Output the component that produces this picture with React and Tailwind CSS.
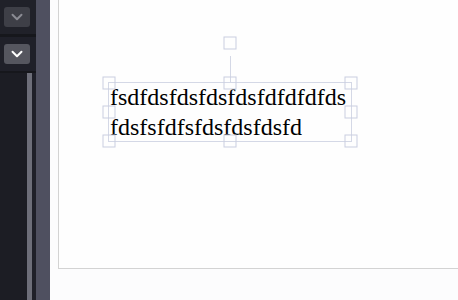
import React from 'react';

const Chevron = ({ className }) => (
  <svg viewBox="0 0 24 24" className={className} fill="none" stroke="currentColor" strokeWidth="2.6" strokeLinecap="round" strokeLinejoin="round">
    <path d="M6 9l6 6 6-6" />
  </svg>
);

const Handle = ({ className }) => (
  <div className={`absolute w-[13px] h-[13px] border border-[#c9cee0] ${className}`} />
);

const App = () => {
  return (
    <div className="flex h-[300px] w-[458px] overflow-hidden bg-[#fcfcfd]">
      {/* Sidebar */}
      <div className="flex w-[36px] shrink-0 flex-col bg-[#1c1d24]">
        <div className="flex h-[37px] items-center justify-center border-b-[3px] border-[#16171c] bg-[#202129] pr-[2px]">
          <button className="flex h-[20px] w-[26px] items-center justify-center rounded-[3px] bg-[#3e3f47] text-[#8b8c94]">
            <Chevron className="h-[18px] w-[18px]" />
          </button>
        </div>
        <div className="flex h-[36px] items-center justify-center border-b-[2px] border-[#16171c] bg-[#1f2029] pr-[2px]">
          <button className="flex h-[20px] w-[26px] items-center justify-center rounded-[3px] bg-[#55565f] text-white">
            <Chevron className="h-[18px] w-[18px]" />
          </button>
        </div>
        <div className="flex flex-1 justify-end">
          <div className="w-[5px] bg-[#6d6e79]" />
          <div className="w-[4px] bg-[#1f2029]" />
        </div>
      </div>
      <div className="w-[14px] shrink-0 bg-[#4f5060]" />

      {/* Canvas area */}
      <div className="flex flex-1 flex-col pb-[31px] pl-[8px]">
        <div className="relative flex-1 border-b border-l border-[#d3d3d3] bg-[#fefefe]">
          {/* text object, canvas coordinates */}
          <div className="absolute left-[49px] top-[82px] h-[60px] w-[244px] border border-[#d4d8e6]">
            <p className="-mt-px pl-[1px] font-['Liberation_Serif',serif] text-[24px] leading-[30px] text-black">
              fsdfdsfdsfdsfdsfdfdfdfds fdsfsfdfsfdsfdsfdsfd
            </p>
            <div className="absolute left-1/2 top-[-27px] h-[27px] w-px bg-[#d4d8e6]" />
            <Handle className="left-1/2 top-[-40px] -translate-x-1/2 -translate-y-1/2" />
            <Handle className="left-0 top-0 -translate-x-1/2 -translate-y-1/2" />
            <Handle className="left-1/2 top-0 -translate-x-1/2 -translate-y-1/2" />
            <Handle className="left-full top-0 -translate-x-1/2 -translate-y-1/2" />
            <Handle className="left-0 top-1/2 -translate-x-1/2 -translate-y-1/2" />
            <Handle className="left-full top-1/2 -translate-x-1/2 -translate-y-1/2" />
            <Handle className="left-0 top-full -translate-x-1/2 -translate-y-1/2" />
            <Handle className="left-1/2 top-full -translate-x-1/2 -translate-y-1/2" />
            <Handle className="left-full top-full -translate-x-1/2 -translate-y-1/2" />
          </div>
        </div>
      </div>
    </div>
  );
};

export default App;
